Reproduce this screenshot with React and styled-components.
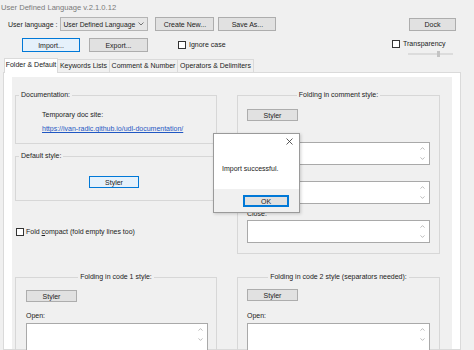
import styled, { createGlobalStyle } from 'styled-components';

const GlobalStyle = createGlobalStyle`
  html, body {
    margin: 0;
    padding: 0;
    background: #f0f0f0;
  }
  body {
    font-family: "Liberation Sans", Arial, sans-serif;
    font-size: 7px;
    color: #222;
  }
  * {
    box-sizing: border-box;
  }
`;

function Chevron({ up }) {
  return (
    <svg width="5" height="3" viewBox="0 0 5 3">
      <path
        d={up ? 'M0.5 2.6 L2.5 0.6 L4.5 2.6' : 'M0.5 0.4 L2.5 2.4 L4.5 0.4'}
        fill="none"
        stroke="#ababab"
        strokeWidth="0.8"
      />
    </svg>
  );
}

function TextField({ height }) {
  return (
    <TextBox $h={height}>
      <Arrows>
        <Chevron up />
        <Chevron />
      </Arrows>
    </TextBox>
  );
}

function Check({ children, ml }) {
  return (
    <CheckRow $ml={ml}>
      <CheckBox />
      <span>{children}</span>
    </CheckRow>
  );
}

export default function App() {
  return (
    <Window>
      <GlobalStyle />
      <TitleBar>User Defined Language v.2.1.0.12</TitleBar>

      <Toolbar>
        <ToolLeft>
          <ToolRow>
            <ToolLabel>User language :</ToolLabel>
            <Select>
              <SelectText>User Defined Language</SelectText>
              <svg width="6" height="4" viewBox="0 0 6 4">
                <path d="M0.5 0.5 L3 3 L5.5 0.5" fill="none" stroke="#555" strokeWidth="0.8" />
              </svg>
            </Select>
            <Button $w={59} $ml={3}>Create New...</Button>
            <Button $w={58}>Save As...</Button>
          </ToolRow>
          <ToolRow $indent={14}>
            <Button $w={58} $focus>Import...</Button>
            <Button $w={59} $ml={5}>Export...</Button>
            <Check ml={26}>Ignore case</Check>
          </ToolRow>
        </ToolLeft>
        <ToolRight>
          <Button $w={47} $ml={17} $mt={1} $h={13}>Dock</Button>
          <Check ml={0}>Transparency</Check>
          <Slider>
            <SliderPart $w={29} />
            <SliderThumb />
            <SliderPart $w={13} />
          </Slider>
        </ToolRight>
      </Toolbar>

      <Tabs>
        <Tab $w={54} $active>Folder &amp; Default</Tab>
        <Tab $w={53}>Keywords Lists</Tab>
        <Tab $w={69}>Comment &amp; Number</Tab>
        <Tab $w={77}>Operators &amp; Delimiters</Tab>
      </Tabs>

      <TabPage>
        <Page>
          <Column>
            <Group>
              <Legend>Documentation:</Legend>
              <DocBody>
                <Line>Temporary doc site:</Line>
                <DocLink href="#">https://ivan-radic.github.io/udl-documentation/</DocLink>
              </DocBody>
            </Group>
            <Group $mt={8}>
              <Legend>Default style:</Legend>
              <StylerBody>
                <Button $w={50} $h={12} $focus>Styler</Button>
              </StylerBody>
            </Group>
            <FoldCheck>
              <CheckBox />
              <span>
                Fold <u>c</u>ompact (fold empty lines too)
              </span>
            </FoldCheck>
          </Column>

          <Group>
            <Legend $center>Folding in comment style:</Legend>
            <FoldBody $pl={9} $pb={10}>
              <Button $w={51} $h={12}>Styler</Button>
              <FieldLabel $mt={10}>Open:</FieldLabel>
              <TextField height={23} />
              <FieldLabel>Middle:</FieldLabel>
              <TextField height={23} />
              <FieldLabel>Close:</FieldLabel>
              <TextField height={23} />
            </FoldBody>
          </Group>

          <Group>
            <Legend $center>Folding in code 1 style:</Legend>
            <FoldBody $pl={10} $pr={8} $pt={9}>
              <Button $w={51} $h={12}>Styler</Button>
              <FieldLabel $mt={9} $mb={3}>Open:</FieldLabel>
              <TextField height={30} />
            </FoldBody>
          </Group>

          <Group>
            <Legend $center>Folding in code 2 style (separators needed):</Legend>
            <FoldBody $pl={9} $pt={8}>
              <Button $w={51} $h={12}>Styler</Button>
              <FieldLabel $mt={10} $mb={3}>Open:</FieldLabel>
              <TextField height={30} />
            </FoldBody>
          </Group>
        </Page>
      </TabPage>

      <Dialog>
        <DialogBody>
          <CloseRow>
            <svg width="7" height="7" viewBox="0 0 7 7">
              <path d="M0.5 0.5 L6.5 6.5 M6.5 0.5 L0.5 6.5" stroke="#333" strokeWidth="0.8" />
            </svg>
          </CloseRow>
          <Message>Import successful.</Message>
        </DialogBody>
        <DialogFooter>
          <Button $w={46} $h={12} $focus $thick>OK</Button>
        </DialogFooter>
      </Dialog>
    </Window>
  );
}

const Window = styled.div`
  position: relative;
  width: 474px;
  height: 350px;
  overflow: hidden;
  background: #f0f0f0;
`;

const TitleBar = styled.div`
  height: 16px;
  padding-left: 1px;
  line-height: 15px;
  font-size: 7.6px;
  color: #7a7a7a;
`;

const Toolbar = styled.div`
  height: 42px;
  display: flex;
  justify-content: space-between;
  padding: 1px 18px 0 8px;
`;

const ToolLeft = styled.div`
  display: flex;
  flex-direction: column;
  gap: 7px;
`;

const ToolRow = styled.div`
  display: flex;
  align-items: center;
  gap: 4px;
  padding-left: ${(p) => p.$indent || 0}px;
`;

const ToolLabel = styled.span`
  margin-right: -1px;
  white-space: nowrap;
`;

const Select = styled.div`
  width: 88px;
  height: 14px;
  flex: none;
  display: flex;
  align-items: center;
  justify-content: space-between;
  padding: 0 3px 0 2px;
  background: #e6e6e6;
  border: 1px solid #b4b4b4;
`;

const SelectText = styled.span`
  white-space: nowrap;
  font-size: 6.8px;
`;

const Button = styled.button`
  width: ${(p) => p.$w}px;
  height: ${(p) => p.$h || 14}px;
  margin-left: ${(p) => p.$ml || 0}px;
  margin-top: ${(p) => p.$mt || 0}px;
  padding: 0;
  flex: none;
  font-family: inherit;
  font-size: 7px;
  color: #222;
  background: ${(p) => (p.$focus && !p.$thick ? '#e5f1fb' : '#e1e1e1')};
  border: ${(p) => (p.$thick ? 2 : 1)}px solid ${(p) => (p.$focus ? '#0078d7' : '#adadad')};
`;

const CheckRow = styled.label`
  display: flex;
  align-items: center;
  gap: 3px;
  margin-left: ${(p) => p.$ml}px;
  margin-top: ${(p) => (p.$ml === 0 ? 9 : 0)}px;
  line-height: 8px;
  white-space: nowrap;
`;

const CheckBox = styled.span`
  width: 8px;
  height: 8px;
  flex: none;
  background: #fff;
  border: 1px solid #333;
`;

const ToolRight = styled.div`
  width: 64px;
  display: flex;
  flex-direction: column;
  align-items: flex-start;
`;

const Slider = styled.div`
  margin: 3px 0 0 16px;
  height: 6px;
  display: flex;
  align-items: center;
`;

const SliderPart = styled.span`
  width: ${(p) => p.$w}px;
  height: 2px;
  background: #dcdcdc;
`;

const SliderThumb = styled.span`
  width: 3px;
  height: 6px;
  background: #c4c4c4;
`;

const Tabs = styled.div`
  height: 14px;
  display: flex;
  align-items: flex-end;
  padding-left: 4px;
`;

const Tab = styled.div`
  width: ${(p) => p.$w}px;
  height: ${(p) => (p.$active ? 15 : 13)}px;
  line-height: 12px;
  text-align: center;
  white-space: nowrap;
  background: ${(p) => (p.$active ? '#fff' : '#f0f0f0')};
  border: 1px solid #dadada;
  border-bottom: none;
  margin-right: -1px;
  margin-bottom: ${(p) => (p.$active ? -1 : 0)}px;
  position: relative;
  z-index: ${(p) => (p.$active ? 1 : 0)};
`;

const TabPage = styled.div`
  margin-left: 3px;
  width: 458px;
  height: 278px;
  background: #fff;
  border: 1px solid #dadada;
  padding: 4px 8px 0 8px;
`;

const Page = styled.div`
  height: 100%;
  background: #f0f0f0;
  padding: 14px 0 0 3px;
  display: grid;
  grid-template-columns: 202px 203px;
  column-gap: 20px;
  row-gap: 19px;
  align-items: start;
  align-content: start;
`;

const Column = styled.div`
  display: flex;
  flex-direction: column;
`;

const Group = styled.fieldset`
  margin: ${(p) => p.$mt || 0}px 0 0 0;
  padding: 0;
  min-width: 0;
  border: 1px solid #d7d7d7;
`;

const Legend = styled.legend`
  padding: 0 2px;
  margin: ${(p) => (p.$center ? '0 auto' : '0 0 0 3px')};
  line-height: 8px;
  font-size: 7px;
`;

const DocBody = styled.div`
  display: flex;
  flex-direction: column;
  gap: 5px;
  padding: 11px 0 10px 26px;
`;

const Line = styled.div`
  line-height: 9px;
`;

const DocLink = styled.a`
  line-height: 9px;
  color: #1f57c3;
  text-decoration: underline;
`;

const StylerBody = styled.div`
  padding: 16px 0 12px 73px;
`;

const FoldCheck = styled.label`
  display: flex;
  align-items: center;
  gap: 2px;
  margin: 27px 0 0 1px;
  line-height: 8px;
`;

const FoldBody = styled.div`
  display: flex;
  flex-direction: column;
  align-items: flex-start;
  padding: ${(p) => p.$pt || 10}px ${(p) => p.$pr ?? 9}px ${(p) => p.$pb || 0}px ${(p) => p.$pl}px;
`;

const FieldLabel = styled.div`
  line-height: 9px;
  margin-top: ${(p) => p.$mt ?? 5}px;
  margin-bottom: ${(p) => p.$mb ?? 2}px;
`;

const TextBox = styled.div`
  width: 100%;
  height: ${(p) => p.$h}px;
  flex: none;
  display: flex;
  justify-content: flex-end;
  background: #fff;
  border: 1px solid #a9a9a9;
`;

const Arrows = styled.div`
  display: flex;
  flex-direction: column;
  justify-content: space-between;
  height: 21px;
  padding: 4px 4px 4px 0;
`;

const Dialog = styled.div`
  position: absolute;
  left: 213px;
  top: 133px;
  width: 87px;
  height: 80px;
  display: flex;
  flex-direction: column;
  border: 1px solid #9a9a9a;
  box-shadow: 1px 1px 3px rgba(0, 0, 0, 0.18);
  z-index: 5;
`;

const DialogBody = styled.div`
  height: 55px;
  background: #fff;
  display: flex;
  flex-direction: column;
`;

const CloseRow = styled.div`
  display: flex;
  justify-content: flex-end;
  padding: 4px 6px 0 0;
  line-height: 0;
`;

const Message = styled.div`
  margin: 19px 0 0 8px;
  line-height: 9px;
`;

const DialogFooter = styled.div`
  flex: 1;
  background: #f0f0f0;
  display: flex;
  justify-content: flex-end;
  align-items: flex-start;
  padding: 6px 10px 0 0;
`;
